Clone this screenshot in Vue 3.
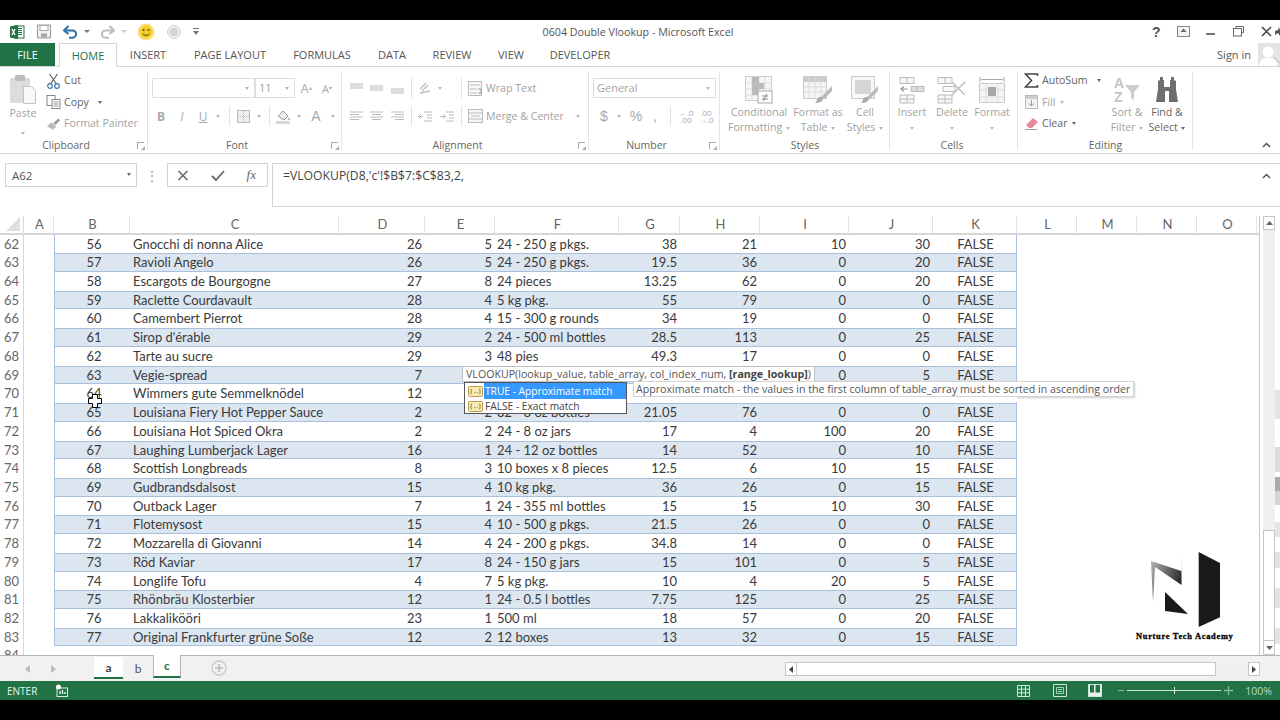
<script setup>
const columns = [
  { l: 'A', w: 30 }, { l: 'B', w: 76 }, { l: 'C', w: 209 }, { l: 'D', w: 86 }, { l: 'E', w: 70 }, { l: 'F', w: 124 },
  { l: 'G', w: 61 }, { l: 'H', w: 80 }, { l: 'I', w: 89 }, { l: 'J', w: 84 }, { l: 'K', w: 84 }, { l: 'L', w: 60 },
  { l: 'M', w: 60 }, { l: 'N', w: 60 }, { l: 'O', w: 60 }
]
const rows = [
  [62, 56, 'Gnocchi di nonna Alice', 26, 5, '24 - 250 g pkgs.', 38, 21, 10, 30],
  [63, 57, 'Ravioli Angelo', 26, 5, '24 - 250 g pkgs.', 19.5, 36, 0, 20],
  [64, 58, 'Escargots de Bourgogne', 27, 8, '24 pieces', 13.25, 62, 0, 20],
  [65, 59, 'Raclette Courdavault', 28, 4, '5 kg pkg.', 55, 79, 0, 0],
  [66, 60, 'Camembert Pierrot', 28, 4, '15 - 300 g rounds', 34, 19, 0, 0],
  [67, 61, "Sirop d'érable", 29, 2, '24 - 500 ml bottles', 28.5, 113, 0, 25],
  [68, 62, 'Tarte au sucre', 29, 3, '48 pies', 49.3, 17, 0, 0],
  [69, 63, 'Vegie-spread', 7, 2, '15 - 625 g jars', 43.9, 24, 0, 5],
  [70, 64, 'Wimmers gute Semmelknödel', 12, 3, '20 bags x 4 pieces', 33.25, 22, 80, 30],
  [71, 65, 'Louisiana Fiery Hot Pepper Sauce', 2, 2, '32 - 8 oz bottles', 21.05, 76, 0, 0],
  [72, 66, 'Louisiana Hot Spiced Okra', 2, 2, '24 - 8 oz jars', 17, 4, 100, 20],
  [73, 67, 'Laughing Lumberjack Lager', 16, 1, '24 - 12 oz bottles', 14, 52, 0, 10],
  [74, 68, 'Scottish Longbreads', 8, 3, '10 boxes x 8 pieces', 12.5, 6, 10, 15],
  [75, 69, 'Gudbrandsdalsost', 15, 4, '10 kg pkg.', 36, 26, 0, 15],
  [76, 70, 'Outback Lager', 7, 1, '24 - 355 ml bottles', 15, 15, 10, 30],
  [77, 71, 'Flotemysost', 15, 4, '10 - 500 g pkgs.', 21.5, 26, 0, 0],
  [78, 72, 'Mozzarella di Giovanni', 14, 4, '24 - 200 g pkgs.', 34.8, 14, 0, 0],
  [79, 73, 'Röd Kaviar', 17, 8, '24 - 150 g jars', 15, 101, 0, 5],
  [80, 74, 'Longlife Tofu', 4, 7, '5 kg pkg.', 10, 4, 20, 5],
  [81, 75, 'Rhönbräu Klosterbier', 12, 1, '24 - 0.5 l bottles', 7.75, 125, 0, 25],
  [82, 76, 'Lakkalikööri', 23, 1, '500 ml', 18, 57, 0, 20],
  [83, 77, 'Original Frankfurter grüne Soße', 12, 2, '12 boxes', 13, 32, 0, 15]
]
</script>

<template>
  <div class="app">
    <div class="black"></div>

    <div class="titlebar">
      <div class="qat">
        <svg class="i-excel" width="16" height="16" viewBox="0 0 16 16"><rect x="5" y="2" width="10" height="12" fill="#fff" stroke="#217346"/><path d="M9 4.5h4M9 6.5h4M9 8.5h4M9 10.5h4" stroke="#217346"/><path d="M1 2.5 9 1v14l-8-1.5z" fill="#217346"/><path d="m3 5 3 6M6 5l-3 6" stroke="#fff" stroke-width="1.4"/></svg>
        <svg class="i-save" width="14" height="15" viewBox="0 0 14 15"><path d="M.5 1h13v13H.5z" fill="#eee" stroke="#999"/><rect x="3" y="1.5" width="8" height="5" fill="#fff" stroke="#aaa"/><rect x="4" y="9.5" width="6" height="4" fill="#aaa"/></svg>
        <svg class="i-undo" width="15" height="14" viewBox="0 0 15 14"><path d="M3 5.5h6.5a3.6 3.6 0 0 1 0 7.2H6" fill="none" stroke="#2b6ea8" stroke-width="2"/><path d="M5.5 1 1 5.5 5.5 9" fill="none" stroke="#2b6ea8" stroke-width="2"/></svg>
        <span class="qcaret dark"></span>
        <svg class="i-redo" width="15" height="14" viewBox="0 0 15 14"><path d="M12 5.5H5.5a3.6 3.6 0 0 0 0 7.2H9" fill="none" stroke="#bbb" stroke-width="2"/><path d="M9.500 1 14 5.500 9.500 9" fill="none" stroke="#bbb" stroke-width="2"/></svg>
        <span class="qcaret"></span>
        <svg class="i-smile" width="18" height="18" viewBox="0 0 18 18"><circle cx="9" cy="9" r="8.500" fill="#fbe27a"/><circle cx="9" cy="9" r="6.500" fill="#f6cb2e"/><circle cx="6.500" cy="7" r="1" fill="#5a4a10"/><circle cx="11.500" cy="7" r="1" fill="#5a4a10"/><path d="M5.500 10.500c1.500 2.500 5.500 2.500 7 0" fill="none" stroke="#5a4a10" stroke-width="1"/></svg>
        <svg class="i-circle" width="14" height="14" viewBox="0 0 14 14"><circle cx="7" cy="7" r="6.500" fill="#f5f5f5" stroke="#ccc"/><circle cx="7" cy="7" r="4.500" fill="#d4d4d4"/></svg>
        <svg class="i-drop" width="8" height="9" viewBox="0 0 8 9"><path d="M1 1.500h6" stroke="#777"/><path d="M1 4h6L4 8z" fill="#777"/></svg>
      </div>
      <div class="title">0604 Double Vlookup - Microsoft Excel</div>
      <div class="winctl">
        <span class="wc help">?</span>
        <span class="wc"><svg width="13" height="11" viewBox="0 0 13 11"><rect x=".5" y=".5" width="12" height="10" fill="#f3f3f3" stroke="#888"/><path d="M6.500 2.500 3.500 6h6z" fill="#666"/></svg></span>
        <span class="wc"><svg width="10" height="10" viewBox="0 0 10 10"><path d="M0 7h9" stroke="#555" stroke-width="1.600"/></svg></span>
        <span class="wc"><svg width="11" height="11" viewBox="0 0 11 11"><path d="M3 2.500V.5h7.500v6h-2" fill="none" stroke="#666"/><rect x=".5" y="2.500" width="8" height="7.500" fill="#fff" stroke="#666"/></svg></span>
        <span class="wc"><svg width="11" height="11" viewBox="0 0 11 11"><path d="m1 1 9 9M10 1l-9 9" stroke="#444" stroke-width="1.500"/></svg></span>
      </div>
    </div>

    <div class="tabs">
      <span class="tab file">FILE</span>
      <span class="tab home">HOME</span>
      <span class="tab t62">INSERT</span>
      <span class="tab t102">PAGE LAYOUT</span>
      <span class="tab t82">FORMULAS</span>
      <span class="tab t58">DATA</span>
      <span class="tab t62">REVIEW</span>
      <span class="tab t56">VIEW</span>
      <span class="tab t82">DEVELOPER</span>
      <span class="signin">Sign in</span>
      <svg class="avatar" width="22" height="23" viewBox="0 0 22 23"><rect width="22" height="23" fill="#e4e4e4"/><circle cx="10" cy="9" r="5.500" fill="#fff"/><path d="M1 23c0-6 4-8 9-8s9 2 9 8z" fill="#fff"/><path d="m16 14 6 6" stroke="#bbb"/></svg>
    </div>

    <div class="ribbon">
      <section class="group g-clip">
        <div class="gbody">
          <div class="paste">
            <svg width="28" height="32" viewBox="0 0 28 32"><rect x="1" y="4" width="20" height="25" rx="1" fill="#dcdcdc"/><rect x="6" y="1" width="10" height="6" rx="1" fill="#bdbdbd"/><path d="M14.500 12.500h8l4 4v13h-12z" fill="#f8f8f8" stroke="#c4c4c4"/></svg>
            <span class="txt lite">Paste</span>
            <span class="caret"></span>
          </div>
          <div class="stack">
            <div class="line">
              <svg class="ic14" viewBox="0 0 14 16" width="14" height="16"><path d="m3 1 7 10M11 1 4 11" stroke="#666" stroke-width="1.200"/><circle cx="3.500" cy="13" r="2.300" fill="none" stroke="#3d74a8" stroke-width="1.200"/><circle cx="10.500" cy="13" r="2.300" fill="none" stroke="#3d74a8" stroke-width="1.200"/></svg>
              <span class="txt mid">Cut</span>
            </div>
            <div class="line">
              <svg class="ic14" viewBox="0 0 14 14" width="14" height="14"><rect x=".5" y=".5" width="8" height="10" fill="#fff" stroke="#888"/><rect x="5.500" y="4.500" width="8" height="9" fill="#fff" stroke="#888"/><path d="M7 7h5M7 9h5M7 11h5" stroke="#999"/></svg>
              <span class="txt mid">Copy</span><span class="caret dk m-copy"></span>
            </div>
            <div class="line">
              <svg class="ic14" viewBox="0 0 16 14" width="15" height="14"><path d="m1 9 5-4 5 5-4 3z" fill="#bbb"/><path d="m8 6 5-5 2 2-5 5z" fill="#999"/></svg>
              <span class="txt lite">Format Painter</span>
            </div>
          </div>
        </div>
        <div class="glabel has-launch">Clipboard<i class="launch"></i></div>
      </section>

      <section class="group g-font">
        <div class="gbody col">
          <div class="rrow">
            <span class="box w103"><i class="caret r"></i></span>
            <span class="box w40 lite">11<i class="caret r"></i></span>
            <span class="c w22 bigA">A<sup>▴</sup></span>
            <span class="c w20 smA">A<sup>▾</sup></span>
          </div>
          <div class="rrow">
            <span class="c w18 fb">B</span>
            <span class="c w24 fi">I</span>
            <span class="c w18 fu">U</span>
            <span class="c w12"><i class="caret"></i></span>
            <span class="c w10"><i class="sep"></i></span>
            <span class="c w18"><svg width="13" height="13" viewBox="0 0 13 13"><rect x=".5" y=".5" width="12" height="12" fill="#eee" stroke="#bbb"/><path d="M6.500 1v11M1 6.500h11" stroke="#bbb" stroke-dasharray="1 1"/></svg></span>
            <span class="c w14"><i class="caret"></i></span>
            <span class="c w6"><i class="sep"></i></span>
            <span class="c w24"><svg width="16" height="15" viewBox="0 0 16 15"><path d="m2 7 5-5 5 5-4 4z" fill="#eee" stroke="#999"/><path d="M13 8c1 1.500 1.500 2 1 3h-2c-.3-1 .5-2 1-3" fill="#bbb"/><rect y="12" width="14" height="3" fill="#d8d8d8"/></svg></span>
            <span class="c w6"><i class="caret"></i></span>
            <span class="c w28 fa">A</span>
            <span class="c w6"><i class="caret"></i></span>
          </div>
        </div>
        <div class="glabel has-launch">Font<i class="launch"></i></div>
      </section>

      <section class="group g-align">
        <div class="gbody col">
          <div class="rrow">
            <span class="c w20"><svg width="13" height="11" viewBox="0 0 13 11"><path d="M0 1h13M0 3h13M0 5h13" stroke="#bbb"/></svg></span>
            <span class="c w20"><svg width="13" height="11" viewBox="0 0 13 11"><path d="M0 3h13M0 5h13M0 7h13" stroke="#bbb"/></svg></span>
            <span class="c w22"><svg width="13" height="11" viewBox="0 0 13 11"><path d="M0 6h13M0 8h13M0 10h13" stroke="#bbb"/></svg></span>
            <span class="c w6"><i class="sep"></i></span>
            <span class="c w22"><svg width="14" height="14" viewBox="0 0 14 14"><path d="m2 8 6-6M4 10l6-6M2 12l10-2" stroke="#bbb" stroke-width="1.300"/></svg></span>
            <span class="c w8"><i class="caret"></i></span>
            <span class="c w14"></span>
            <span class="c w6"><i class="sep"></i></span>
            <svg class="m4" width="15" height="15" viewBox="0 0 15 15"><rect x=".5" y=".5" width="13" height="14" fill="#f8f8f8" stroke="#bbb"/><path d="M2 4h10M2 8h7M2 12h7" stroke="#bbb"/><path d="M10 12h3V8h-3" fill="none" stroke="#999"/></svg>
            <span class="txt lite m3">Wrap Text</span>
          </div>
          <div class="rrow">
            <span class="c w20"><svg width="13" height="11" viewBox="0 0 13 11"><path d="M0 1h13M0 3.500h9M0 6h13M0 8.500h9" stroke="#bbb"/></svg></span>
            <span class="c w20"><svg width="13" height="11" viewBox="0 0 13 11"><path d="M0 1h13M2 3.500h9M0 6h13M2 8.500h9" stroke="#bbb"/></svg></span>
            <span class="c w22"><svg width="13" height="11" viewBox="0 0 13 11"><path d="M0 1h13M4 3.500h9M0 6h13M4 8.500h9" stroke="#bbb"/></svg></span>
            <span class="c w6"><i class="sep"></i></span>
            <span class="c w22"><svg width="14" height="11" viewBox="0 0 14 11"><path d="M6 1h8M9 4h5M9 7h5M6 10h8M5 5.500H0M3 3 .5 5.500 3 8" fill="none" stroke="#bbb"/></svg></span>
            <span class="c w22"><svg width="14" height="11" viewBox="0 0 14 11"><path d="M6 1h8M9 4h5M9 7h5M6 10h8M0 5.500h5M3 3l2.500 2.500L3 8" fill="none" stroke="#bbb"/></svg></span>
            <span class="c w6"><i class="sep"></i></span>
            <svg class="m4" width="15" height="14" viewBox="0 0 15 14"><rect x=".5" y=".5" width="14" height="13" fill="#f8f8f8" stroke="#bbb"/><path d="M1 4h13M1 10h13M3 7h9" stroke="#bbb"/></svg>
            <span class="txt lite m3 w80">Merge &amp; Center</span>
            <span class="c w24"><i class="caret"></i></span>
          </div>
        </div>
        <div class="glabel has-launch">Alignment<i class="launch"></i></div>
      </section>

      <section class="group g-num">
        <div class="gbody col">
          <div class="rrow">
            <span class="box w123 lite">General<i class="caret r"></i></span>
          </div>
          <div class="rrow">
            <span class="c w22 fa">$</span>
            <span class="c w8"><i class="caret"></i></span>
            <span class="c w26 fa">%</span>
            <span class="c w12 fa">,</span>
            <span class="c w18"><i class="sep"></i></span>
            <span class="c w14 dec">←.0<br>.00</span>
            <span class="c w6"></span>
            <span class="c w14 dec">.00<br>→.0</span>
          </div>
        </div>
        <div class="glabel has-launch">Number<i class="launch"></i></div>
      </section>

      <section class="group g-styles">
        <div class="gbody">
          <div class="big w68">
            <svg width="28" height="28" viewBox="0 0 28 28"><rect x=".5" y=".5" width="26" height="24" fill="#f7f7f7" stroke="#ccc"/><path d="M7 1v24M14 1v24M20 1v24M1 7h26M1 13h26M1 19h26" stroke="#ddd"/><path d="M7 1h7v6h-7zM7 7h12v6H7zM7 13h7v6H7z" fill="#bbb"/><rect x="13" y="15" width="14" height="12" fill="#fff" stroke="#aaa"/><path d="M17 20h6M17 23h6M22 18l-4 7" stroke="#888"/></svg>
            <span class="txt lite">Conditional</span>
            <span class="txt lite">Formatting <i class="caret in"></i></span>
          </div>
          <div class="big w50">
            <svg width="30" height="28" viewBox="0 0 30 28"><rect x=".5" y=".5" width="23" height="22" fill="#f4f4f4" stroke="#ccc"/><path d="M1 1h22v5H1z" fill="#ccc"/><path d="M6 1v21M12 1v21M18 1v21M1 11h22M1 16h22" stroke="#ddd"/><path d="m29 10-11 11 3 2 8-8z" fill="#bbb"/><path d="M14 23c3-3 5-2 6 0-1 3-4 4-8 4 1-1 2-2 2-4" fill="#aaa"/></svg>
            <span class="txt lite">Format as</span>
            <span class="txt lite">Table <i class="caret in"></i></span>
          </div>
          <div class="big w44">
            <svg width="28" height="28" viewBox="0 0 28 28"><rect x=".5" y=".5" width="23" height="22" fill="#f8f8f8" stroke="#ccc"/><rect x="4" y="4" width="16" height="14" fill="#d6d6d6"/><path d="m27 10-11 11 3 2 8-8z" fill="#bbb"/><path d="M12 23c3-3 5-2 6 0-1 3-4 4-8 4 1-1 2-2 2-4" fill="#aaa"/></svg>
            <span class="txt lite">Cell</span>
            <span class="txt lite">Styles <i class="caret in"></i></span>
          </div>
        </div>
        <div class="glabel">Styles</div>
      </section>

      <section class="group g-cells">
        <div class="gbody">
          <div class="big w40">
            <svg width="26" height="28" viewBox="0 0 26 28"><path d="M1 1.500h14v6H1zM8 1.500v6M1 19h14v8H1zM8 19v8M1 23h14" fill="#f7f7f7" stroke="#bbb"/><path d="M12 10.500h13v5H12zM18 10.500v5" fill="#ddd" stroke="#bbb"/><path d="M9 13H2M5 10.500 2 13l3 2.500" fill="none" stroke="#999" stroke-width="1.200"/></svg>
            <span class="txt lite">Insert</span>
            <i class="caret"></i>
          </div>
          <div class="big w40">
            <svg width="30" height="28" viewBox="0 0 30 28"><path d="M1 1.500h14v6H1zM8 1.500v6M1 19h14v8H1zM8 19v8M1 23h14M6 10.500h12v5H6z" fill="#f7f7f7" stroke="#bbb"/><path d="m15 6 13 13M28 6 15 19" stroke="#bbb" stroke-width="1.400"/></svg>
            <span class="txt lite">Delete</span>
            <i class="caret"></i>
          </div>
          <div class="big w40">
            <svg width="28" height="28" viewBox="0 0 28 28"><path d="M2 1v5M26 1v5M3 3.500h22" stroke="#aaa"/><rect x="1.500" y="7.500" width="25" height="19" fill="#f4f4f4" stroke="#ccc"/><path d="M8 8v18M20 8v18M2 14h24M2 21h24" stroke="#ddd"/><rect x="10" y="11" width="8" height="9" fill="#a8a8a8"/></svg>
            <span class="txt lite">Format</span>
            <i class="caret"></i>
          </div>
        </div>
        <div class="glabel cells-label">Cells</div>
      </section>

      <section class="group g-edit">
        <div class="gbody">
          <div class="stack ed">
            <div class="line">
              <svg class="ic14" width="14" height="15" viewBox="0 0 14 15"><path d="M13 3V1H1l6 6.500L1 14h12v-2" fill="none" stroke="#444" stroke-width="1.500"/></svg>
              <span class="txt mid">AutoSum</span><span class="caret dk m-auto"></span>
            </div>
            <div class="line">
              <svg class="ic14" width="13" height="14" viewBox="0 0 13 14"><rect x=".5" y=".5" width="12" height="13" fill="#f3f3f3" stroke="#bbb"/><rect x="1" y="1" width="11" height="3" fill="#ccc"/><path d="M6.500 5v6M4 8.500l2.500 2.500L9 8.500" fill="none" stroke="#999"/></svg>
              <span class="txt lite">Fill</span><span class="caret m-fill"></span>
            </div>
            <div class="line">
              <svg class="ic14" width="13" height="13" viewBox="0 0 13 13"><path d="m1 8 7-7 5 4-6 6H4z" fill="#e58a9e"/><path d="M0 12.500h12" stroke="#999"/></svg>
              <span class="txt mid">Clear</span><span class="caret dk m-fill"></span>
            </div>
          </div>
          <div class="big w38">
            <svg width="28" height="28" viewBox="0 0 28 28"><text x="1" y="12" class="sorttxt">A</text><text x="1" y="26" class="sorttxt">Z</text><path d="M12 9h15l-6 7v8l-3-2v-6z" fill="#ccc"/></svg>
            <span class="txt lite">Sort &amp;</span>
            <span class="txt lite">Filter <i class="caret in"></i></span>
          </div>
          <div class="big w42">
            <svg width="26" height="28" viewBox="0 0 26 28"><path d="M6 1h3v3h1v7h6V4h1V1h3v3l2 1v8l2 13h-9V15h-4v11H2l2-13V5l2-1z" fill="#6e6e6e"/></svg>
            <span class="txt mid">Find &amp;</span>
            <span class="txt mid">Select <i class="caret in dk"></i></span>
          </div>
        </div>
        <div class="glabel">Editing</div>
      </section>

      <div class="collapse">
        <svg width="9" height="6" viewBox="0 0 9 6"><path d="m1 5 3.500-3.500L8 5" fill="none" stroke="#555" stroke-width="1.500"/></svg>
      </div>
    </div>

    <div class="formula">
      <div class="namebox">A62<i class="caret r dk"></i></div>
      <div class="dots">⋮</div>
      <div class="fxbox">
        <svg width="12" height="11" viewBox="0 0 12 11"><path d="m1.500 1 9 9M10.500 1l-9 9" stroke="#666" stroke-width="1.500"/></svg>
        <svg width="14" height="11" viewBox="0 0 14 11"><path d="m1 6 4 4 8-9" fill="none" stroke="#666" stroke-width="1.800"/></svg>
        <span class="fx">fx</span>
      </div>
      <div class="finput">
        <span>=VLOOKUP(D8,'c'!$B$7:$C$83,2,</span>
        <svg width="9" height="6" viewBox="0 0 9 6"><path d="m1 5 3.500-3.500L8 5" fill="none" stroke="#555" stroke-width="1.500"/></svg>
      </div>
    </div>

    <div class="sheet">
      <div class="grid">
        <div class="hrow">
          <div class="corner"><svg width="14" height="14" viewBox="0 0 14 14"><path d="M14 0v14H0z" fill="#dfdfdf"/></svg></div>
          <div v-for="c in columns" :key="c.l" class="hcell" :style="{ width: c.w + 'px' }">{{ c.l }}</div>
        </div>
        <div v-for="(r, idx) in rows" :key="r[0]" class="row" :class="{ blue: idx % 2 === 1 }">
          <div class="rh">{{ r[0] }}</div>
          <div class="a"></div>
          <div class="d b">{{ r[1] }}</div>
          <div class="d cc">{{ r[2] }}</div>
          <div class="d num w86">{{ r[3] }}</div>
          <div class="d num w70">{{ r[4] }}</div>
          <div class="d f">{{ r[5] }}</div>
          <div class="d num w61">{{ r[6] }}</div>
          <div class="d num w80c">{{ r[7] }}</div>
          <div class="d num w89">{{ r[8] }}</div>
          <div class="d num w84">{{ r[9] }}</div>
          <div class="d k">FALSE</div>
        </div>
        <div class="row">
          <div class="rh">84</div>
        </div>
      </div>
      <div class="vscroll">
        <div class="vbtn"><svg width="7" height="4" viewBox="0 0 7 4"><path d="M3.500 0 7 4H0z" fill="#666"/></svg></div>
        <div class="vtrack"></div>
        <div class="vthumb"></div>
        <div class="vbtn low"><svg width="7" height="4" viewBox="0 0 7 4"><path d="M3.500 4 7 0H0z" fill="#666"/></svg></div>
      </div>
      <div class="strip"></div>
    </div>

    <div class="sheetbar">
      <span class="nav"><svg width="5" height="8" viewBox="0 0 5 8"><path d="M5 0v8L0 4z" fill="#bbb"/></svg></span>
      <span class="nav"><svg width="5" height="8" viewBox="0 0 5 8"><path d="M0 0v8l5-4z" fill="#bbb"/></svg></span>
      <span class="stab sel">a</span>
      <span class="stab plain">b</span>
      <span class="stab act">c</span>
      <svg class="plus" width="16" height="16" viewBox="0 0 16 16"><circle cx="8" cy="8" r="7" fill="none" stroke="#c8c8c8" stroke-width="1.300"/><path d="M8 4v8M4 8h8" stroke="#bbb" stroke-width="1.600"/></svg>
      <div class="hscroll">
        <span class="hbtn"><svg width="4" height="7" viewBox="0 0 4 7"><path d="M4 0v7L0 3.500z" fill="#444"/></svg></span>
        <span class="hthumb"></span>
        <span class="htrack"></span>
        <span class="hbtn"><svg width="4" height="7" viewBox="0 0 4 7"><path d="M0 0v7l4-3.500z" fill="#444"/></svg></span>
      </div>
    </div>

    <div class="status">
      <span class="enter">ENTER</span>
      <svg class="macro" width="13" height="13" viewBox="0 0 13 13"><rect x="2" y="4" width="10.500" height="8.500" fill="none" stroke="#d8efe2"/><circle cx="3.500" cy="3" r="2.500" fill="#fff"/><path d="M5 10V7M7.500 10V6M10 10V8" stroke="#fff" stroke-width="1.300"/></svg>
      <div class="sright">
        <svg width="13" height="12" viewBox="0 0 13 12"><path d="M.5.500h12v11H.5zM4.500.500v11M8.500.500v11M.5 4.200h12M.5 7.800h12" fill="none" stroke="#cfe8da"/></svg>
        <svg class="vw2" width="14" height="13" viewBox="0 0 14 13"><path d="M.5.500h13v12H.5z" fill="none" stroke="#cfe8da"/><path d="M3.500 3.500h7v6h-7zM5 5.500h4M5 7.500h4" fill="none" stroke="#a8d3bb"/></svg>
        <svg class="vw3" width="14" height="13" viewBox="0 0 14 13"><path d="M.5.500h13v12H.5z" fill="#e8f3ed" stroke="#cfe8da"/><path d="M2 1h4v7.500H2zM7.500 1H12v7.500H7.500z" fill="#217346"/></svg>
        <span class="zm minus"></span>
        <span class="slider"><i></i></span>
        <svg class="zplus" width="9" height="9" viewBox="0 0 9 9"><path d="M4.500 0v9M0 4.500h9" stroke="#7fbb9b" stroke-width="1.300"/></svg>
        <span class="pct">100%</span>
      </div>
    </div>

    <div class="black"></div>

    <div class="hint">VLOOKUP(lookup_value, table_array, col_index_num, <b>[range_lookup]</b>)</div>
    <div class="ac">
      <div class="aci on">
        <svg width="15" height="11" viewBox="0 0 15 11"><rect x=".5" y=".5" width="14" height="10" rx="1" fill="#f7e9b4" stroke="#b89b4c"/><path d="M4 3c-1 0-1 1-1 2.500S3 8 4 8M11 3c1 0 1 1 1 2.500S12 8 11 8" fill="none" stroke="#8a7330"/><path d="M6 6.500h.6M7.500 6.500h.6M9 6.500h.6" stroke="#8a7330"/></svg>
        <span>TRUE - Approximate match</span>
      </div>
      <div class="aci">
        <svg width="15" height="11" viewBox="0 0 15 11"><rect x=".5" y=".5" width="14" height="10" rx="1" fill="#f7e9b4" stroke="#b89b4c"/><path d="M4 3c-1 0-1 1-1 2.500S3 8 4 8M11 3c1 0 1 1 1 2.500S12 8 11 8" fill="none" stroke="#8a7330"/><path d="M6 6.500h.6M7.500 6.500h.6M9 6.500h.6" stroke="#8a7330"/></svg>
        <span>FALSE - Exact match</span>
      </div>
    </div>
    <div class="tip">Approximate match - the values in the first column of table_array must be sorted in ascending order</div>

    <svg class="cursor" width="14" height="14" viewBox="0 0 14 14"><path d="M4.500.5h5v4h4v5h-4v4h-5v-4h-4v-5h4z" fill="#fff" stroke="#000"/></svg>

    <svg class="junk" width="5" height="9" viewBox="0 0 5 9"><path d="M0 4 3 3l1-3 1 3v6L3 6 0 8z" fill="#555"/></svg>

    <div class="logo">
      <svg width="100" height="78" viewBox="0 0 100 78">
        <defs><linearGradient id="lg" x1="0" x2="1" y1="0" y2=".6"><stop offset="0" stop-color="#bbb"/><stop offset="1" stop-color="#222"/></linearGradient></defs>
        <path d="M62.700 0 84 11v54.300L62.700 75z" fill="#1a1a1a"/>
        <path d="M15 9 45.300 19 45.300 4 45.600 33 19 15 17 50z" fill="url(#lg)"/>
        <path d="M29 40 52 62 29 59z" fill="#1a1a1a"/>
      </svg>
      <div class="logotxt">Nurture Tech Academy</div>
    </div>
  </div>
</template>

<style scoped>
.app { position: relative; width: 1280px; height: 720px; overflow: hidden; background: #fff; display: flex; flex-direction: column; font-family: "Open Sans", "Liberation Sans", sans-serif; color: #444; }
.black { height: 20px; background: #000; flex: none; }
svg { display: block; flex: none; }

.titlebar { height: 23px; display: grid; grid-template-columns: 1fr auto 1fr; align-items: center; flex: none; }
.qat { display: flex; align-items: center; padding-left: 9px; }
.i-save { margin-left: 12px; }
.i-undo { margin-left: 12px; }
.qcaret { width: 0; height: 0; margin-left: 6px; border: 3px solid transparent; border-top-color: #ccc; border-bottom: 0; }
.qcaret.dark { border-top-color: #777; }
.i-redo { margin-left: 10px; }
.i-smile { margin-left: 10px; }
.i-circle { margin-left: 12px; }
.i-drop { margin-left: 11px; }
.title { font-size: 10.7px; color: #555; margin-left: -4px; }
.winctl { display: flex; justify-content: flex-end; }
.wc { width: 27.5px; display: flex; justify-content: center; align-items: center; height: 23px; }
.help { font: bold 14px "Liberation Sans", sans-serif; color: #555; }

.tabs { height: 24px; display: flex; align-items: stretch; border-bottom: 1px solid #d6d6d6; flex: none; box-sizing: border-box; }
.tab { display: flex; align-items: center; justify-content: center; font-size: 11px; color: #555; }
.file { width: 55px; background: #217346; color: #fff; }
.home { width: 58px; margin-left: 4px; color: #217346; border: 1px solid #d6d6d6; border-bottom: 1px solid #fff; margin-bottom: -1px; box-sizing: border-box; }
.t62 { width: 62px; } .t102 { width: 102px; } .t82 { width: 82px; } .t58 { width: 58px; } .t56 { width: 56px; }
.signin { margin-left: auto; align-self: center; font-size: 11px; color: #555; margin-right: 7px; }
.avatar { margin-bottom: -1px; }

.ribbon { height: 87px; display: flex; border-bottom: 1px solid #d6d6d6; box-sizing: border-box; flex: none; }
.group { display: flex; flex-direction: column; position: relative; box-sizing: border-box; flex: none; }
.group::after { content: ""; position: absolute; right: 0; top: 4px; bottom: 3px; width: 1px; background: #e4e4e4; }
.g-clip { width: 148px; } .g-font { width: 194px; } .g-align { width: 247px; } .g-num { width: 131px; }
.g-styles { width: 170px; } .g-cells { width: 128px; } .g-edit { width: 175px; }
.gbody { height: 70px; display: flex; flex: none; }
.gbody.col { flex-direction: column; padding-top: 11px; gap: 8px; box-sizing: border-box; }
.glabel { height: 16px; display: flex; align-items: center; justify-content: center; font-size: 10.5px; color: #666; position: relative; }
.has-launch { padding-right: 16px; }
.cells-label { padding-right: 4px; }
.launch { position: absolute; right: 4px; top: 5px; width: 6px; height: 6px; border-left: 1px solid #aaa; border-bottom: 0; border-top: 1px solid #aaa; }
.launch::after { content: ""; position: absolute; right: -1px; bottom: -1px; border: 2px solid #aaa; border-top-color: transparent; border-left-color: transparent; }

.txt { font-size: 10.6px; line-height: 15px; white-space: nowrap; }
.lite { color: #a2a2a2; }
.mid { color: #666; }
.caret { display: inline-block; width: 0; height: 0; border: 2.5px solid transparent; border-top: 3px solid #b8b8b8; border-bottom: 0; }
.caret.dk { border-top-color: #666; }
.caret.in { vertical-align: middle; margin-left: 1px; }
.caret.r { position: absolute; right: 5px; top: 8px; }

.paste { width: 46px; display: flex; flex-direction: column; align-items: center; padding-top: 7px; box-sizing: border-box; flex: none; }
.paste .caret { margin-top: 11px; }
.stack { display: flex; flex-direction: column; padding-top: 3px; }
.line { height: 21.5px; display: flex; align-items: center; }
.ic14 { width: 15px; margin-right: 3px; }
.m-copy { margin-left: 9px; }
.m-auto { margin-left: 10px; }
.m-fill { margin-left: 4px; }
.ed { width: 90px; padding-left: 6px; box-sizing: border-box; flex: none; }

.rrow { display: flex; height: 20px; align-items: center; }
.g-font .rrow, .g-num .rrow, .g-align .rrow { padding-left: 4px; }
.c { display: flex; align-items: center; justify-content: center; height: 20px; flex: none; }
.box { position: relative; height: 20px; border: 1px solid #dedede; box-sizing: border-box; display: flex; align-items: center; padding-left: 3px; padding-bottom: 1px; font-size: 11px; flex: none; }
.w6 { width: 6px; } .w8 { width: 8px; } .w10 { width: 10px; } .w12 { width: 12px; } .w14 { width: 14px; } .w18 { width: 18px; }
.w20 { width: 20px; } .w22 { width: 22px; } .w24 { width: 24px; } .w26 { width: 26px; } .w28 { width: 28px; }
.w40 { width: 40px; } .w103 { width: 103px; } .w123 { width: 123px; }
.w44 { width: 44px; } .w50 { width: 50px; } .w68 { width: 68px; } .w38 { width: 38px; } .w42 { width: 42px; }
.sep { display: block; width: 1px; height: 20px; background: #e2e2e2; }
.bigA { font-size: 13px; color: #aaa; } .smA { font-size: 11px; color: #aaa; }
.bigA sup, .smA sup { font-size: 6px; line-height: 0; }
.fb { font-weight: 700; font-size: 12px; color: #aaa; }
.fi { font-style: italic; font-size: 12px; color: #aaa; }
.fu { text-decoration: underline; font-size: 12px; color: #aaa; }
.fa { font-size: 14px; color: #a8a8a8; font-family: "Liberation Sans", sans-serif; }
.dec { font-size: 8px; line-height: 7px; color: #aaa; white-space: nowrap; text-align: center; display: block; height: 14px; }
.m4 { margin-left: 4px; }
.m3 { margin-left: 3px; }
.w80 { width: 80px; flex: none; }
.big { display: flex; flex-direction: column; align-items: center; padding-top: 8px; box-sizing: border-box; flex: none; }
.big svg { height: 30px; }
.big > .caret { margin-top: 7px; }
.g-styles .gbody { padding-left: 5px; box-sizing: border-box; }
.g-cells .gbody { padding-left: 2px; box-sizing: border-box; }
.sorttxt { font: 700 14px "Liberation Sans", sans-serif; fill: #c4c4c4; }
.collapse { flex: 1; display: flex; justify-content: flex-end; align-items: flex-end; padding: 0 9px 5px 0; }

.formula { height: 53px; padding-top: 9px; box-sizing: border-box; display: flex; align-items: flex-start; flex: none; }
.namebox { position: relative; width: 132px; height: 24px; margin-left: 5px; border: 1px solid #d4d4d4; box-sizing: border-box; display: flex; align-items: center; padding-left: 6px; font-size: 11.5px; color: #555; }
.namebox .caret { top: 9px; }
.dots { width: 30px; height: 24px; display: flex; align-items: center; justify-content: center; color: #aaa; font-size: 14px; }
.fxbox { width: 101px; height: 24px; border: 1px solid #d4d4d4; box-sizing: border-box; display: flex; align-items: center; justify-content: space-between; padding: 0 11px 0 9px; }
.fx { font: italic 13px "Liberation Serif", serif; color: #666; }
.finput { flex: 1; height: 44px; margin-left: 4px; border: 1px solid #d4d4d4; border-right: 0; box-sizing: border-box; display: flex; justify-content: space-between; padding: 4px 9px 0 10px; font-size: 12.2px; color: #444; line-height: 16px; }
.finput svg { margin-top: 5px; }

.sheet { height: 448px; padding-top: 9px; box-sizing: border-box; display: flex; flex: none; background: #fff; position: relative; }
.grid { width: 1260px; height: 439px; overflow: hidden; border-right: 1px solid #c6c6c6; box-sizing: border-box; flex: none; font-family: Lato, "Liberation Sans", sans-serif; font-size: 13px; color: #3a3a3a; }
.hrow { display: flex; height: 18.6px; box-sizing: border-box; border-bottom: 2px solid #d6d6d6; align-items: stretch; }
.corner { width: 24px; display: flex; align-items: center; justify-content: flex-end; padding: 0 3px 0 0; box-sizing: border-box; border-right: 1px solid #d6d6d6; flex: none; }
.hcell { display: flex; align-items: center; justify-content: center; padding-left: 2px; color: #666; border-right: 1px solid #e4e4e4; box-sizing: border-box; flex: none; }
.row { display: flex; height: 18.72px; line-height: 18.72px; white-space: nowrap; }
.rh { width: 24px; box-sizing: border-box; border-right: 1px solid #d6d6d6; text-align: center; color: #666; flex: none; }
.a { width: 30px; flex: none; }
.d { box-sizing: border-box; overflow: hidden; flex: none; }
.b { width: 76px; text-align: center; padding-left: 3px; border-left: 1px solid #a9c0dc; }
.cc { width: 209px; padding-left: 3px; }
.num { text-align: right; padding-right: 3px; }
.w86 { width: 86px; } .w70 { width: 70px; } .w61 { width: 61px; } .w80c { width: 80px; } .w89 { width: 89px; } .w84 { width: 84px; }
.f { width: 124px; padding-left: 2px; }
.k { width: 84px; text-align: center; padding-left: 2px; border-right: 1px solid #a9c0dc; }
.blue .d { background: #dce6f1; box-shadow: inset 0 1px #a9c0dc, inset 0 -1px #a9c0dc; }

.vscroll { width: 12px; margin-left: 3px; display: flex; flex-direction: column; height: 439px; flex: none; }
.vbtn { height: 14px; border: 1px solid #c6c6c6; box-sizing: border-box; background: #fff; display: flex; align-items: center; justify-content: center; flex: none; }
.vbtn.low { border-top: 0; }
.vtrack { flex: 1; background: #f0f0f0; }
.vthumb { height: 111px; background: #fff; border: 1px solid #c6c6c6; box-sizing: border-box; flex: none; }
.strip { position: absolute; right: 0; top: 9px; width: 5px; height: 439px;
  background: linear-gradient(#fff 0 174px, #e4e4e4 174px 203px, #fff 203px 231px, #dcdcdc 231px 256px, #fff 256px 261px, #aaa 261px 274px, #d4d4d4 276px 289px, #fff 289px 306px, #e4e4e4 306px 321px, #fff 321px 336px, #e4e4e4 336px 352px, #fff 352px 372px, #e4e4e4 372px 392px, #fff 392px 412px, #e4e4e4 412px 428px, #fff 428px); }

.sheetbar { height: 26px; background: #f1f1f1; border-top: 1px solid #b5b5b5; box-sizing: border-box; display: flex; align-items: flex-start; position: relative; flex: none; }
.nav { width: 26px; height: 25px; display: flex; align-items: center; justify-content: center; }
.nav:first-child { margin-left: 14px; }
.stab { height: 22px; display: flex; align-items: center; justify-content: center; font-size: 12px; font-family: Lato, sans-serif; flex: none; box-sizing: border-box; }
.sel { width: 29px; margin-left: 28px; background: #fff; font-weight: 700; border-bottom: 2px solid #217346; margin-top: 1px; }
.plain { width: 30px; color: #555; margin-top: 1px; }
.act { width: 28px; background: #fff; height: 23px; color: #217346; font-weight: 700; border-bottom: 2px solid #217346; border-left: 1px solid #b5b5b5; border-right: 1px solid #b5b5b5; margin-top: -1px; }
.plus { margin: 4px 0 0 30px; }
.hscroll { position: absolute; left: 785px; top: 6px; width: 475px; height: 14px; display: flex; }
.hbtn { width: 12px; height: 14px; background: #fff; border: 1px solid #c6c6c6; box-sizing: border-box; display: flex; align-items: center; justify-content: center; flex: none; }
.hthumb { flex: none; width: 419px; background: #fff; border: 1px solid #c6c6c6; border-left: 0; box-sizing: border-box; }
.htrack { flex: 1; background: #f0f0f0; }

.status { height: 19px; background: #217346; display: flex; align-items: center; flex: none; color: #fff; }
.enter { font-size: 10px; margin-left: 7px; color: #e8f3ed; }
.macro { margin-left: 18px; }
.sright { margin-left: auto; display: flex; align-items: center; }
.vw2 { margin-left: 23px; }
.vw3 { margin-left: 21px; }
.zm.minus { width: 6px; height: 1px; background: #7fbb9b; margin-left: 16px; }
.slider { position: relative; width: 94px; height: 1px; background: #cfe8da; margin-left: 3px; }
.slider i { position: absolute; left: 47px; top: -3px; width: 1px; height: 7px; background: #e8f3ed; }
.zplus { margin-left: 3px; }
.pct { font-size: 10.5px; color: #b5d8c5; margin: 0 8px 0 12px; }

.hint { position: absolute; left: 462px; top: 366px; height: 16px; padding: 0 3px; border: 1px solid #bebebe; box-sizing: border-box; background: #fff; font-size: 10.65px; line-height: 14px; color: #555; white-space: nowrap; }
.hint b { color: #444; }
.ac { position: absolute; left: 464px; top: 382px; width: 163px; height: 32px; border: 1px solid #555; box-sizing: border-box; background: #fff; font-size: 10.2px; color: #444; }
.aci { display: flex; align-items: center; height: 15px; padding-left: 3px; gap: 1px; }
.aci span { flex: 1; height: 15px; line-height: 15px; padding-left: 1px; white-space: nowrap; }
.aci.on { height: 16px; }
.aci.on span { background: #3399ff; color: #fff; height: 16px; line-height: 16px; }
.tip { position: absolute; left: 633px; top: 381px; height: 16px; width: 501px; border: 1px solid #d4d4d4; box-sizing: border-box; background: #fff; box-shadow: 1px 1px 2px rgba(0,0,0,.2); font-size: 10.63px; line-height: 14px; padding-left: 2px; color: #555; white-space: nowrap; }
.tip::after { content: ""; position: absolute; left: -1px; right: 116px; top: 15px; height: 5px; background: #fff; }
.cursor { position: absolute; left: 88px; top: 394px; }
.junk { position: absolute; left: 1275px; top: 27px; }
.logo { position: absolute; left: 1136px; top: 552px; width: 100px; }
.logotxt { font: 900 8.4px "Liberation Serif", serif; letter-spacing: .72px; color: #000; white-space: nowrap; margin-top: 2px; -webkit-text-stroke: .3px #000; }
</style>

<style>
body { margin: 0; background: #000; }
</style>
